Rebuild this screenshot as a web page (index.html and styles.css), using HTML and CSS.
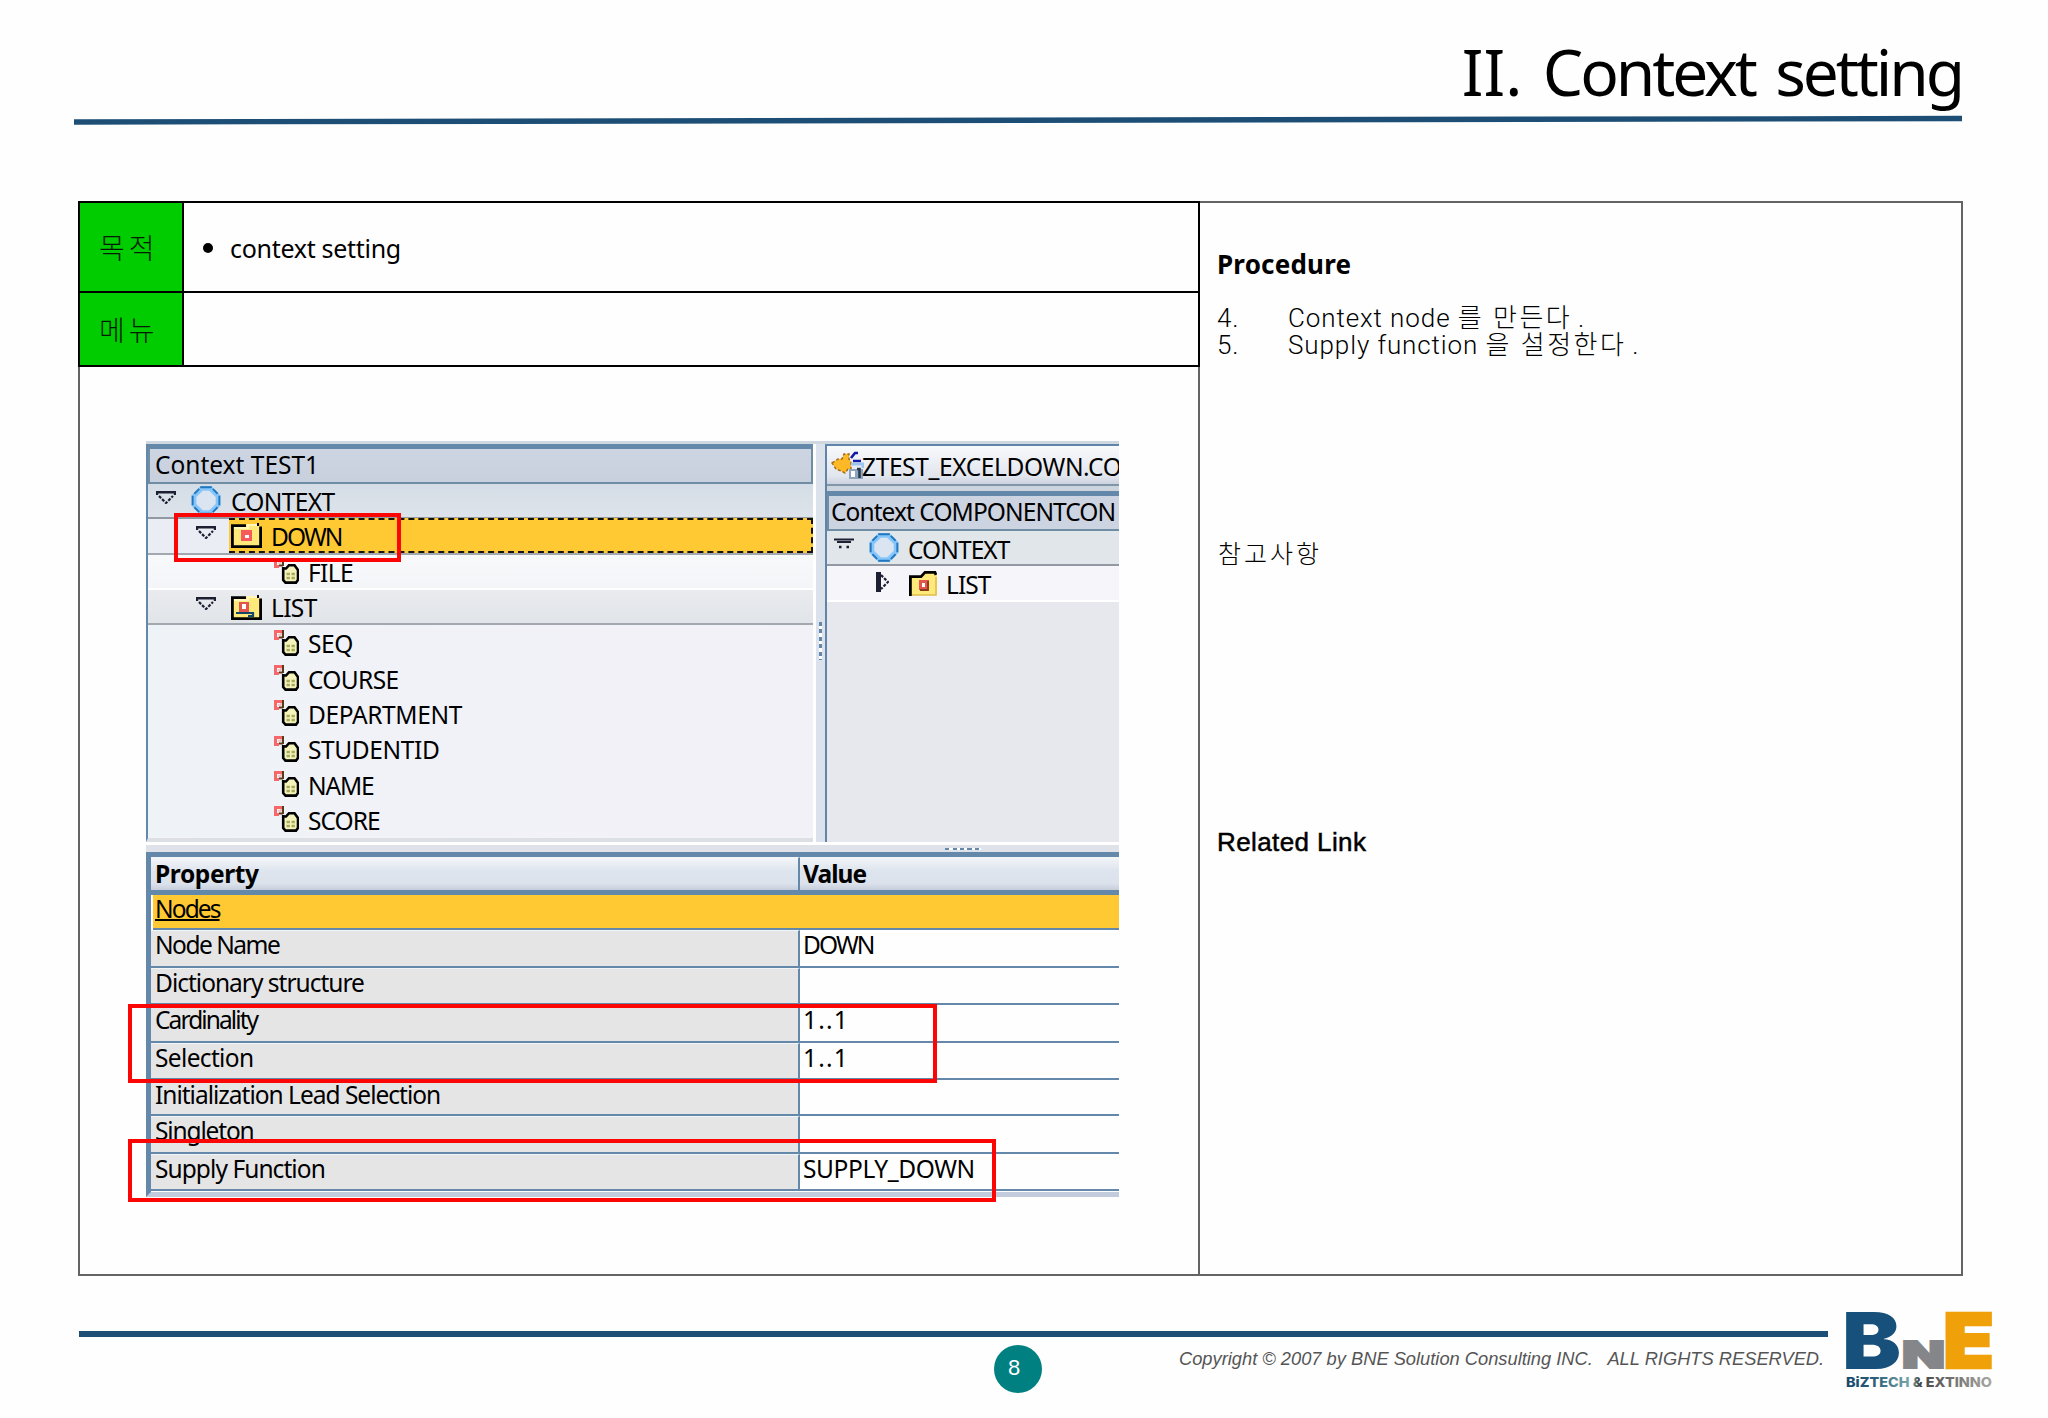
FILE: index.html
```
<!DOCTYPE html>
<html lang="ko">
<head>
<meta charset="utf-8">
<title>II. Context setting</title>
<link rel="stylesheet" href="styles.css">
</head>
<body>
<svg width="0" height="0" class="defs">
  <defs>
    <symbol id="caret-down" viewBox="0 0 20 13"><path d="M1 4V1.2H19V4" fill="none" stroke="#1d2033" stroke-width="2.4"/><path d="M3 5 10 12 17 5" fill="none" stroke="#1d2033" stroke-width="2.2" stroke-dasharray="3 1.4"/></symbol>
    <symbol id="caret-flat" viewBox="0 0 20 13"><path d="M0 1.4H20M3 4H17" stroke="#1d2033" stroke-width="2" fill="none"/><path d="M5 9H15" stroke="#1d2033" stroke-width="2.4" stroke-dasharray="2.5 5"/></symbol>
    <symbol id="caret-right" viewBox="0 0 13 20"><path d="M0 0H5V20H0Z" fill="#1d2033"/><path d="M5 3 12 10 5 17" fill="none" stroke="#1d2033" stroke-width="2.2" stroke-dasharray="3 1.4"/></symbol>
    <symbol id="circle" viewBox="0 0 30 30"><path d="M10.500 2.500H19.500L27.500 10.500V19.500L19.500 27.500H10.500L2.500 19.500V10.500Z" fill="#dbe5f2" stroke="#86c6fb" stroke-width="5"/><path d="M9 1.2H21M9 28.8H21M1.2 10V20M28.8 10V20M3 8 8 3M22 3 27 8M3 22 8 27M22 27 27 22" stroke="#2277bd" stroke-width="2"/></symbol>
    <symbol id="folder" viewBox="0 0 31 25"><path d="M1.4 3H15V1H27V3H29.6V23.6H1.4Z" fill="#ffe97a"/><path d="M3 5H17V2H27" fill="none" stroke="#fff7bd" stroke-width="2"/><path d="M15 2.6H1.4V23.6H29.6V3.6" fill="none" stroke="#000" stroke-width="2.8"/><path d="M26 0H28V3H26Z" fill="#000"/><path d="M10 7H21V18H10Z" fill="#f65a5a"/><path d="M14 12H18V15H14Z" fill="#fff"/></symbol>
    <symbol id="folder-list" viewBox="0 0 31 25"><path d="M1.4 3H15V1H27V3H29.6V23.6H1.4Z" fill="#ffe97a"/><path d="M3 5H17V2H27" fill="none" stroke="#fff7bd" stroke-width="2"/><path d="M15 2.6H1.4V23.6H29.6V3.6" fill="none" stroke="#000" stroke-width="2.8"/><path d="M26 0H28V3H26Z" fill="#000"/><path d="M8 7H18V17H8Z" fill="#e5554f"/><path d="M11 9H15V14H11Z" fill="#fff"/><path d="M5 18H22V21H17" fill="none" stroke="#12466a" stroke-width="2.2"/></symbol>
    <symbol id="folder-closed" viewBox="0 0 28 25"><path d="M1 5H13L17 1H26L28 4V24H1Z" fill="#ffe97a"/><path d="M1.4 25V5.6H12L16 1.4H26L27 4" fill="none" stroke="#000" stroke-width="2.8"/><path d="M3 24H27V6" fill="none" stroke="#e0bd4c" stroke-width="1.6"/><path d="M10 9H20V19H10Z" fill="#e5554f"/><path d="M13 12H16V16H13Z" fill="#fff"/><path d="M19 10V19H11" fill="none" stroke="#8a3a1c" stroke-width="1.8"/></symbol>
    <symbol id="leaf" viewBox="0 0 25 26"><path d="M8 1.5H1.5V8.500H5" fill="none" stroke="#f8686a" stroke-width="3"/><path d="M4 5H7V3" fill="none" stroke="#f8a0a0" stroke-width="1.2"/><path d="M9 0V8M5 7.500H9" stroke="#5b3a1c" stroke-width="2"/><path d="M9.2 9V22L11.500 24.600H22L24 22V12L20.500 7.200H15L12 10.500H9.200" fill="#f3f3bb" stroke="#000" stroke-width="2.6"/><path d="M12.500 16H21M12.500 20H21" stroke="#a9ab5c" stroke-width="2.4" stroke-dasharray="3.4 1.6"/></symbol>
    <symbol id="component" viewBox="0 0 33 29"><path d="M1 12 7 8 11 8 13 3H18V8L20 11V18H17L14 22 10 20 5 18Z" fill="#fcb827" stroke="#a36a10" stroke-width="1.4" stroke-dasharray="3 2"/><path d="M20 7 24 2H27M22 10H30" fill="none" stroke="#1119a8" stroke-width="2.6"/><path d="M20 13H32V17" fill="none" stroke="#9cc4ef" stroke-width="3"/><path d="M18 18H32V28H18Z" fill="#8ea4bd"/><path d="M20 20H24V26H20Z" fill="#fff"/><path d="M26 18H28.500V27" fill="none" stroke="#26384e" stroke-width="2.5"/></symbol>
  </defs>
</svg>

<main class="slide">
  <header class="top">
    <h1><span class="numeral">II.</span> Context setting</h1>
    <svg class="rule" width="1888" height="10" viewBox="0 0 1888 10"><path d="M0 7 1888 3.500" stroke="#1d4f76" stroke-width="5.400"/></svg>
  </header>

  <section class="frame">
    <div class="left">
      <div class="info">
        <div class="key">목적</div><div class="val"><i class="dot"></i><span>context setting</span></div>
        <div class="key">메뉴</div><div class="val"></div>
      </div>

      <div class="shot">
        <div class="panes">
          <div class="tree">
            <div class="tree-head"><span>Context TEST1</span></div>
            <div class="row root"><svg class="car"><use href="#caret-down"/></svg><svg class="cir"><use href="#circle"/></svg><span class="t7">CONTEXT</span></div>
            <div class="row down"><svg class="car"><use href="#caret-down"/></svg><div class="sel"><svg class="fol"><use href="#folder"/></svg><span class="t20">DOWN</span></div></div>
            <div class="row leaf first"><svg><use href="#leaf"/></svg><span class="t7">FILE</span></div>
            <div class="row list"><svg class="car"><use href="#caret-down"/></svg><svg class="fol"><use href="#folder-list"/></svg><span class="t7">LIST</span></div>
            <div class="leaves">
              <div class="row leaf"><svg><use href="#leaf"/></svg><span class="t4">SEQ</span></div>
              <div class="row leaf"><svg><use href="#leaf"/></svg><span class="t7">COURSE</span></div>
              <div class="row leaf"><svg><use href="#leaf"/></svg><span class="t4">DEPARTMENT</span></div>
              <div class="row leaf"><svg><use href="#leaf"/></svg><span class="t4">STUDENTID</span></div>
              <div class="row leaf"><svg><use href="#leaf"/></svg><span class="t11">NAME</span></div>
              <div class="row leaf"><svg><use href="#leaf"/></svg><span class="t9">SCORE</span></div>
            </div>
          </div>
          <div class="split"><i></i></div>
          <div class="side">
            <div class="side-title"><svg><use href="#component"/></svg><span class="t4">ZTEST_EXCELDOWN.CO</span></div>
            <div class="side-head"><span class="t9">Context COMPONENTCON</span></div>
            <div class="row sroot"><svg class="car"><use href="#caret-flat"/></svg><svg class="cir"><use href="#circle"/></svg><span class="t9">CONTEXT</span></div>
            <div class="row slist"><svg class="rt"><use href="#caret-right"/></svg><svg class="fc"><use href="#folder-closed"/></svg><span class="t9">LIST</span></div>
          </div>
        </div>
        <div class="hsplit"><i></i></div>
        <div class="props">
          <div class="prow phead"><div><b class="t4">Property</b></div><div><b class="t9">Value</b></div></div>
          <div class="nodes"><span class="t20">Nodes</span></div>
          <div class="prow"><div><span class="t16">Node Name</span></div><div><span class="t20">DOWN</span></div></div>
          <div class="prow"><div><span class="t10">Dictionary structure</span></div><div></div></div>
          <div class="prow"><div><span class="t20">Cardinality</span></div><div><span class="range">1..1</span></div></div>
          <div class="prow"><div><span class="t7">Selection</span></div><div><span class="range">1..1</span></div></div>
          <div class="prow noline"><div><span class="t10">Initialization Lead Selection</span></div><div></div></div>
          <div class="prow"><div><span class="t11">Singleton</span></div><div></div></div>
          <div class="prow"><div><span class="t9">Supply Function</span></div><div><span class="t4">SUPPLY_DOWN</span></div></div>
        </div>
        <i class="mark m1"></i><i class="mark m2"></i><i class="mark m3"></i>
      </div>
    </div>

    <aside class="notes">
      <h2>Procedure</h2>
      <ol start="4">
        <li><em>4.</em><span>Context node <span class="ko">를 만든다<span class="stop"> .</span></span></span></li>
        <li><em>5.</em><span>Supply function <span class="ko">을 설정한다<span class="stop"> .</span></span></span></li>
      </ol>
      <p class="ref">참고사항</p>
      <p class="rel">Related Link</p>
    </aside>
  </section>

  <footer class="foot">
    <div class="foot-main">
      <div class="foot-line"></div>
      <div class="foot-row"><div class="num">8</div><div class="copy"><span>Copyright © 2007 by BNE Solution Consulting INC. &nbsp; ALL RIGHTS RESERVED.</span></div></div>
    </div>
    <svg class="logo" width="148" height="78" viewBox="0 0 148 78">
      <defs><linearGradient id="tag" x1="0" x2="1"><stop offset="0" stop-color="#17466c"/><stop offset=".2" stop-color="#2b6079"/><stop offset=".45" stop-color="#7fa9ad"/><stop offset=".5" stop-color="#444"/><stop offset="1" stop-color="#a9a9a4"/></linearGradient></defs>
      <g class="brand">
        <text x="-4" y="57" font-size="79" textLength="59" lengthAdjust="spacingAndGlyphs" fill="#17507a">B</text>
        <text x="56" y="56" font-size="37" textLength="43" lengthAdjust="spacingAndGlyphs" fill="#85868a" stroke="#85868a" stroke-width="2">N</text>
        <text x="97" y="56" font-size="76" textLength="51" lengthAdjust="spacingAndGlyphs" fill="#f0a009" stroke="#f0a009" stroke-width="2.500">E</text>
        <text x="0" y="75" font-size="13.500" textLength="146" lengthAdjust="spacingAndGlyphs" fill="url(#tag)" class="tagline">BiZTECH &amp; EXTINNO</text>
      </g>
    </svg>
  </footer>
</main>
</body>
</html>
```
FILE: styles.css
```
* { box-sizing: border-box; }
body { margin: 0; background: #fefefe; color: #000; font-family: "Noto Sans", "Noto Sans CJK KR", sans-serif; }
.defs { position: absolute; }
.slide { width: 2048px; height: 1418px; display: flex; flex-direction: column; overflow: hidden; }
span, b { white-space: nowrap; }

.t4 { letter-spacing: -.38px; }
.t7 { letter-spacing: -.65px; }
.t9 { letter-spacing: -.93px; }
.t10 { letter-spacing: -1px; }
.t11 { letter-spacing: -1.15px; }
.t16 { letter-spacing: -1.5px; }
.t20 { letter-spacing: -1.9px; }
.range { letter-spacing: 1.2px; }

.top { height: 201px; padding: 0 86px 0 74px; display: flex; flex-direction: column; align-items: flex-end; }
h1 { margin: 0; height: 115px; padding-top: 28px; font-size: 64px; line-height: 88px; font-weight: 400; letter-spacing: -3.1px; word-spacing: 7px; white-space: nowrap; }
.numeral { letter-spacing: 0; }
.rule { display: block; }

.frame { width: 1885px; height: 1075px; margin-left: 78px; border: 2px solid #646464; display: grid; grid-template-columns: 1120px 1fr; flex: none; }
.left { border-right: 2px solid #646464; }
.info { display: grid; grid-template-columns: 104px 1fr; grid-template-rows: 90px 74px; margin: -2px -2px 0 -2px; border: 2px solid #000; border-bottom: 0; }
.key { background: #00cc00; border-right: 2px solid #000; border-bottom: 2px solid #000; font: 300 28px/88px "Noto Sans CJK KR", sans-serif; padding-left: 19px; letter-spacing: 4px; color: #021c02; }
.val { border-bottom: 2px solid #000; display: flex; align-items: center; font-size: 25px; letter-spacing: -.3px; padding-left: 19px; }
.key:nth-child(3) { line-height: 73px; }
.dot { width: 10px; height: 10px; border-radius: 50%; background: #000; margin: 2px 17px 0 0; }
.val span { padding-top: 1px; }

.shot { position: relative; width: 973px; height: 756px; margin: 74px 0 0 66px; font-size: 24.5px; }
.panes { display: flex; height: 401px; border-top: 3px solid #cfd7e0; }
.tree { width: 667px; border-left: 2px solid #6488aa; border-bottom: 4px solid #dcdfe4; background: #f2f2f8; }
.tree-head { height: 40px; border: 2px solid #6f8ea5; border-top: 5px solid #6488aa; background: linear-gradient(#cdd5e2, #c8d0de); line-height: 31px; padding-left: 5px; }
.row { height: 35.3px; display: flex; align-items: center; line-height: 35px; }
.row svg { flex: none; display: block; }
.row span { padding-top: 2px; }
.car { width: 20px; height: 13px; }
.cir { width: 30px; height: 29px; }
.fol { width: 31px; height: 25px; }
.root { background: linear-gradient(#d4dde6, #dde3ea); border-bottom: 2px solid #9299a3; padding-left: 8px; gap: 15px; }
.root span { margin-left: -5px; }
.root .car, .down .car, .list .car { margin-top: -6px; }
.down { background: #eaedf3; border-bottom: 2px solid #a3a8b0; padding-left: 48px; gap: 13px; }
.sel { flex: 1; height: 35px; background: #fec932; border: 2px dashed #15130b; border-left: 0; display: flex; align-items: center; gap: 9px; padding-left: 2px; line-height: 31px; }
.leaf { padding-left: 126px; gap: 9px; }
.leaf svg { width: 25px; height: 26px; }
.first { background: linear-gradient(#f8f9fb, #f3f5f8); border-bottom: 2px solid #fff; }
.list { background: linear-gradient(#e9ebef, #e1e4e8); border-bottom: 2px solid #a3a8b0; padding-left: 48px; }
.list .fol { margin: 2px 9px 0 15px; }
.leaves { background: linear-gradient(90deg, #eef3f7, #f1f2f8 40%, #f3f1f8); }
.split { width: 12px; border-left: 3px solid #fff; background: #dbe2eb; padding: 178px 0 0 3px; }
.split i { display: block; width: 3px; height: 38px; background: repeating-linear-gradient(#6488aa 0 4px, #fff 4px 7.500px); }
.side { width: 294px; overflow: hidden; border-left: 2px solid #5f86aa; background: #e7e8ed; }
.side-title { height: 42px; border-top: 2px solid #5f86aa; border-bottom: 2px solid #8296a9; background: linear-gradient(#f8f9fb, #e1e5ed 80%, #ccd2de); padding-left: 4px; display: flex; align-items: center; line-height: 38px; }
.side-title svg { width: 33px; height: 29px; flex: none; }
.side-title span { padding-top: 4px; margin-left: -2px; }
.side-head { margin-top: 5px; height: 40px; border: 2px solid #6f8ea5; border-right: 0; border-top: 5px solid #6488aa; background: #ccd3e1; line-height: 32px; padding-left: 2px; box-shadow: 0 -5px #ccd5de; }
.side .row span { padding-top: 4px; }
.sroot { background: #e0e6ea; border-bottom: 2px solid #9299a3; padding-left: 7px; }
.sroot .cir { margin: 0 9px 0 15px; }
.sroot .car { margin-top: -6px; }
.slist { background: #f5f5fa; border-bottom: 2px solid #fff; padding-left: 49px; }
.rt { width: 13px; height: 20px; margin-top: -2px; }
.fc { width: 28px; height: 25px; margin: 2px 9px 0 20px; }
.hsplit { height: 10px; border-top: 3px solid #fff; background: #dfe3e9; padding: 3px 0 0 799px; }
.hsplit i { display: block; width: 36px; height: 2px; background: repeating-linear-gradient(90deg, #6488aa 0 4px, #fff 4px 7.500px); }

.props { border-left: 5px solid #6488aa; border-top: 5px solid #6488aa; border-bottom: 5px solid #c2ccdc; height: 345px; }
.prow { height: 37.500px; display: grid; grid-template-columns: 649px 1fr; border-bottom: 2px solid #6488aa; line-height: 29px; }
.prow > div { padding-left: 4px; }
.prow > div:first-child { background: #e6e5e6; border-right: 2px solid #6488aa; border-top: 1px solid #f2f5f8; line-height: 27px; }
.prow > div:last-child { background: #fefefe; padding-left: 3px; }
.phead { height: 38px; border-bottom: 5px solid #6488aa; }
.phead > div:first-child, .phead > div:last-child { background: linear-gradient(#f3f6f9, #dfe5ee 40%, #dce2ec 80%, #c6cedb); line-height: 33px; }
.phead > div:first-child { line-height: 31px; }
.nodes { height: 35px; margin-left: 2px; background: #fec932; border-bottom: 2px solid #6488aa; text-decoration: underline; text-decoration-thickness: 2px; padding-left: 2px; line-height: 27px; }
.noline { height: 36px; }

.mark { position: absolute; border: 4px solid #fb0505; }
.m1 { left: 28px; top: 72px; width: 227px; height: 49px; }
.m2 { left: -18px; top: 563px; width: 809px; height: 79px; }
.m3 { left: -18px; top: 698px; width: 868px; height: 63px; }

.notes { padding: 46px 0 0 17px; font-family: "Liberation Sans", "Noto Sans CJK KR", sans-serif; font-size: 25px; }
h2 { margin: 0; font: 700 26px/30px "Noto Sans", sans-serif; letter-spacing: .2px; }
ol { list-style: none; margin: 26px 0 0; padding: 0; font-family: Roboto, "Noto Sans CJK KR", sans-serif; font-size: 26px; letter-spacing: .9px; font-weight: 300; line-height: 26.500px; height: 54px; }
li { display: flex; height: 26.500px; }
.ko { font-size: 26px; letter-spacing: 2.5px; margin-left: 0; }
.stop { margin-left: -3px; }
em { font-style: normal; width: 71px; }
.ref { margin: 178px 0 0 1px; font: 300 25px/30px "Noto Sans CJK KR", sans-serif; letter-spacing: 3px; }
.rel { margin: 260px 0 0; font: 400 26px/30px "Liberation Sans", sans-serif; letter-spacing: .4px; -webkit-text-stroke: .5px #000; }

.foot { display: flex; margin: 36px 0 0 79px; height: 106px; }
.foot-main { width: 1767px; }
.foot-line { margin-top: 19px; width: 1749px; height: 6px; background: #1d4f76; }
.foot-row { display: flex; margin-left: 915px; padding-top: 8px; align-items: flex-start; }
.num { width: 48px; height: 48px; border-radius: 50%; background: #008080; color: #fff; font: 22px/46px "Liberation Sans", sans-serif; padding-left: 14px; }
.copy { margin-left: 137px; font: italic 18.300px/28px "Liberation Sans", sans-serif; color: #555; }
.logo { display: block; overflow: visible; }
.brand { font-family: Inter, sans-serif; font-weight: 900; }
.tagline { font-weight: 800; }
```
